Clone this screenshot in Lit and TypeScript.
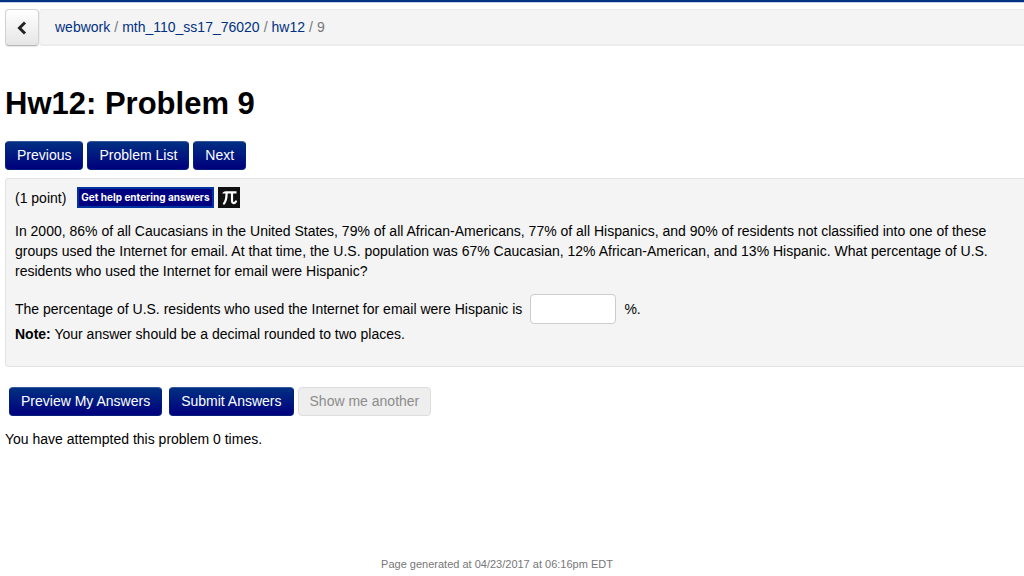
import { LitElement, html, css } from "lit";
import { customElement } from "lit/decorators.js";

@customElement("app-root")
export class AppRoot extends LitElement {
  static styles = css`
    :host {
      display: flex;
      flex-direction: column;
      min-height: 100vh;
      box-sizing: border-box;
      overflow-x: hidden;
      border-top: 2px solid #003082;
      background: #fff;
      color: #000;
      font: 14px/20px "Liberation Sans", Arial, sans-serif;
    }
    *, *::before, *::after { box-sizing: border-box; }
    a { color: #003082; text-decoration: none; }
    .nav {
      display: flex;
      padding: 6px 0 0 5px;
      border-top: 1px solid #c3cfe4;
    }
    .back {
      display: flex;
      align-items: center;
      justify-content: center;
      width: 34px;
      height: 37px;
      border: 1px solid #d2d2d2;
      border-bottom-color: #b8b8b8;
      border-radius: 4px;
      background: linear-gradient(#fff, #e6e6e6);
      box-shadow: 0 1px 1px rgba(0, 0, 0, 0.1);
    }
    .crumbs {
      flex: 1;
      display: flex;
      gap: 4px;
      margin: 0;
      padding: 7px 15px;
      list-style: none;
      background: #f4f4f4;
      border: 1px solid #ececec;
      border-right: 0;
      border-bottom-width: 2px;
      border-radius: 4px 0 0 4px;
      color: #777;
    }
    .crumbs li + li::before { content: "/"; margin-right: 4px; }
    main { padding: 38px 0 0 5px; }
    h1 {
      margin: 0;
      font-size: 31px;
      line-height: 40px;
      font-weight: 700;
    }
    .row { display: flex; gap: 4px; }
    .pager { margin: 17px 0 8px; }
    .btn {
      height: 29px;
      padding: 4px 11px;
      border: 1px solid #00207a;
      border-top-color: #35589c;
      border-radius: 4px;
      background: linear-gradient(#003082, #00007d);
      color: #fff;
      font: inherit;
      line-height: 19px;
      white-space: nowrap;
    }
    .btn:disabled {
      border-color: #ddd;
      background: #eee;
      color: #8c8c8c;
    }
    .well {
      padding: 8px 5px 22px 9px;
      border: 1px solid #e3e3e3;
      border-right: 0;
      border-radius: 4px 0 0 4px;
      background: #f4f4f4;
    }
    .head { display: flex; align-items: center; height: 21px; }
    .help {
      height: 21px;
      margin: 0 4px 0 11px;
      padding: 0 2px;
      border: 2px solid #0033a0;
      background: #000080;
      color: #fff;
      font: bold 10px/17px Inter, sans-serif;
      white-space: nowrap;
    }
    p { margin: 0; }
    .question { margin-top: 13px; }
    .answer { display: flex; align-items: center; gap: 8px; margin-top: 13px; }
    .answer input {
      width: 86px;
      height: 30px;
      padding: 4px 6px;
      border: 1px solid #ccc;
      border-radius: 4px;
      background: #fff;
      font: inherit;
    }
    .actions { padding: 20px 0 13px 4px; }
    .first { margin-right: 3px; }
    footer {
      margin-top: auto;
      padding: 0 30px 2px 0;
      text-align: center;
      font-size: 11px;
      color: #777;
    }
  `;

  render() {
    return html`
      <nav class="nav" aria-label="Breadcrumb">
        <a class="back" href="#" aria-label="Back">
          <svg width="10" height="14" viewBox="0 0 10 14" fill="none" stroke="#222" stroke-width="3">
            <path d="M8 1.5 2.5 7 8 12.5" />
          </svg>
        </a>
        <ul class="crumbs">
          <li><a href="#">webwork</a></li>
          <li><a href="#">mth_110_ss17_76020</a></li>
          <li><a href="#">hw12</a></li>
          <li>9</li>
        </ul>
      </nav>
      <main>
        <h1>Hw12: Problem 9</h1>
        <div class="row pager">
          <button class="btn">Previous</button>
          <button class="btn">Problem List</button>
          <button class="btn">Next</button>
        </div>
        <section class="well">
          <div class="head">
            <span>(1 point)</span>
            <a class="help" href="#">Get help entering answers</a>
            <svg width="22" height="21" viewBox="0 0 22 21" aria-hidden="true">
              <rect width="22" height="21" fill="#111" />
              <path d="M4 7.5C4.6 5 5.8 4.3 8 4.3H18.500V6.600H4.500" fill="#fff" />
              <path d="M8.600 6C8.600 11 8 14 6 16.600M14 6V14C14 16.500 16.500 17 18 14.500" fill="none" stroke="#fff" stroke-width="2.200" stroke-linecap="round" />
            </svg>
          </div>
          <p class="question">
            In 2000, 86% of all Caucasians in the United States, 79% of all African-Americans, 77% of all Hispanics, and 90% of residents not classified into one of these groups used the Internet for email. At that time, the U.S. population was 67% Caucasian, 12% African-American, and 13% Hispanic. What percentage of U.S. residents who used the Internet for email were Hispanic?
          </p>
          <div class="answer">
            <label for="ans">The percentage of U.S. residents who used the Internet for email were Hispanic is</label>
            <input id="ans" type="text" />
            <span>%.</span>
          </div>
          <p><b>Note:</b> Your answer should be a decimal rounded to two places.</p>
        </section>
        <div class="row actions">
          <button class="btn first">Preview My Answers</button>
          <button class="btn">Submit Answers</button>
          <button class="btn" disabled>Show me another</button>
        </div>
        <p>You have attempted this problem 0 times.</p>
      </main>
      <footer>Page generated at 04/23/2017 at 06:16pm EDT</footer>
    `;
  }
}
